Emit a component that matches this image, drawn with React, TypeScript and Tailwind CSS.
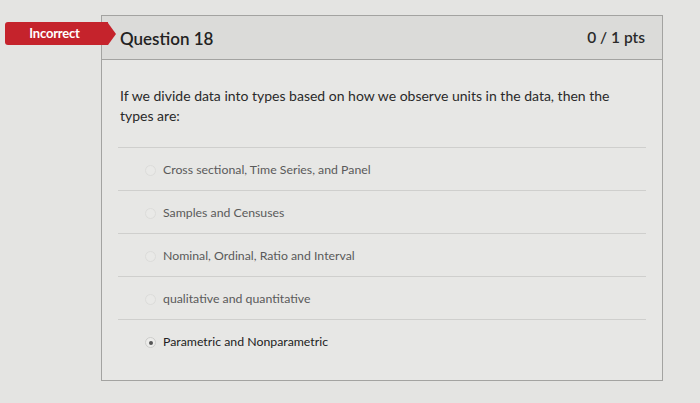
import React from "react";

const answers = [
  "Cross sectional, Time Series, and Panel",
  "Samples and Censuses",
  "Nominal, Ordinal, Ratio and Interval",
  "qualitative and quantitative",
  "Parametric and Nonparametric",
];

export default function App() {
  return (
    <div
      className="relative w-[700px] h-[403px] bg-[#e4e4e2] pt-[15px] pl-[101px] overflow-hidden"
      style={{ fontFamily: "Lato, 'Open Sans', sans-serif" }}
    >
      <div className="absolute left-[5px] top-[22px] flex h-[23px] items-center">
        <div className="flex h-[23px] w-[103px] items-center justify-center rounded-l-[3px] bg-[#c5232c] pr-[4px] pt-[1px] text-[13px] font-bold text-white tracking-[-0.2px]">
          Incorrect
        </div>
        <div className="h-0 w-0 border-y-[11.5px] border-l-[8px] border-y-transparent border-l-[#c5232c]" />
      </div>

      <div className="w-[562px] h-[366px] border-[1.5px] border-[#a3a3a1] bg-[#e7e7e5] flex flex-col">
        <div className="h-[44px] shrink-0 flex items-center justify-between bg-[#dbdbd9] border-b-[1.5px] border-[#a3a3a1] pl-[18px] pr-[17px]">
          <span className="text-[17px] font-semibold text-[#222] pt-[2px]">Question 18</span>
          <span className="text-[15.5px] font-semibold text-[#2a2a2a]">0 / 1 pts</span>
        </div>
        <div className="px-[16px] pt-[26px]">
          <p className="text-[14px] leading-[20px] text-[#2a2a2a] pl-[2px] pr-[20px]">
            If we divide data into types based on how we observe units in the data, then the types are:
          </p>
          <div className="mt-[21px]">
            {answers.map((a, i) => {
              const selected = i === answers.length - 1;
              return (
                <div
                  key={a}
                  className="h-[43px] border-t border-[#cfcfcd] flex items-center pl-[27px] pt-[3px]"
                >
                  <div
                    className={
                      selected
                        ? "w-[11px] h-[11px] rounded-full border border-[#cdcdcb] bg-[#ececea] flex items-center justify-center"
                        : "w-[11px] h-[11px] rounded-full border border-[#dcdcda] bg-[#e9e9e7]"
                    }
                  >
                    {selected && <div className="w-[4px] h-[4px] rounded-full bg-[#555]" />}
                  </div>
                  <span
                    className={
                      selected
                        ? "ml-[7px] text-[12.3px] text-[#222]"
                        : "ml-[7px] text-[12.3px] text-[#5a5a5a]"
                    }
                  >
                    {a}
                  </span>
                </div>
              );
            })}
          </div>
        </div>
      </div>
    </div>
  );
}
